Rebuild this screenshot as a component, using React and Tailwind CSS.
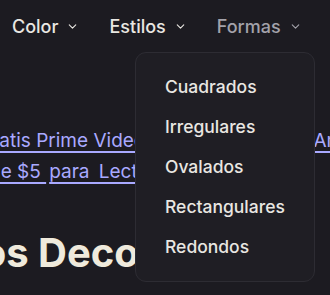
import React from "react";

const Chevron = ({ className }) => (
  <svg viewBox="0 0 24 24" className={className} fill="none" stroke="currentColor" strokeWidth="2" strokeLinecap="round" strokeLinejoin="round">
    <path d="M6 9l6 6 6-6" />
  </svg>
);

export default function App() {
  const items = ["Cuadrados", "Irregulares", "Ovalados", "Rectangulares", "Redondos"];
  return (
    <div className="relative w-[330px] h-[295px] overflow-hidden bg-[#1c1b21] font-['Inter',sans-serif]">
      <nav className="flex items-center h-[52px] pl-[12px] text-[18px] font-medium">
        <div className="flex items-center gap-[8px] text-[#e9e7e2]">
          <span>Color</span>
          <Chevron className="w-[13px] h-[13px] mt-[1px]" />
        </div>
        <div className="flex items-center gap-[8px] ml-[30px] text-[#e9e7e2]">
          <span>Estilos</span>
          <Chevron className="w-[13px] h-[13px] mt-[1px]" />
        </div>
        <div className="flex items-center gap-[8px] ml-[30px] text-[#a3a2aa]">
          <span>Formas</span>
          <Chevron className="w-[13px] h-[13px] mt-[1px]" />
        </div>
      </nav>

      <div className="mt-[73px] text-[19px] leading-[31px] text-[#a9a9ff] whitespace-nowrap">
        <div className="ml-[-22px]">
          <a className="underline decoration-2 underline-offset-[4px]">
            Gratis Prime Video<span className="[word-spacing:-2.2px]"> durante 30 días de </span>Amazon
          </a>
        </div>
        <div className="ml-[-11px]">
          <a className="underline decoration-2 underline-offset-[4px]">de $5 </a>
          <a className="ml-[3px] [word-spacing:4px] underline decoration-2 underline-offset-[4px]">para Lectores</a>
        </div>
      </div>

      <h1 className="mt-[42px] ml-[-172px] whitespace-nowrap text-[40px] leading-[48px] font-bold text-[#efeadc]">
        Productos Decorativos
      </h1>

      <div className="absolute left-[135px] top-[52px] w-[180px] py-[14px] rounded-[11px] border border-[#2d2c33] bg-[#1f1e24]">
        {items.map((t) => (
          <div key={t} className="h-[40px] flex items-center pl-[29px] text-[17.5px] font-medium text-[#e9e7e2]">
            {t}
          </div>
        ))}
      </div>
    </div>
  );
}
